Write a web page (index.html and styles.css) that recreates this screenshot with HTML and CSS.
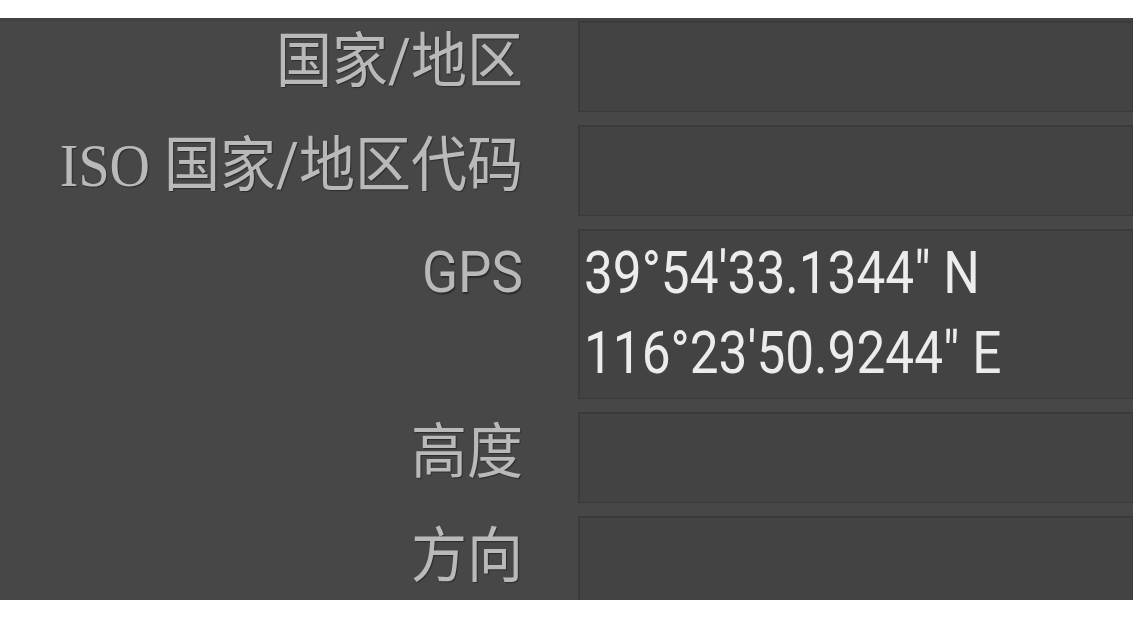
FILE: index.html
```html
<!DOCTYPE html>
<html lang="zh-CN">
<head>
<meta charset="utf-8">
<title>元数据</title>
<link rel="stylesheet" href="styles.css">
</head>
<body>
<div class="panel">
  <div class="label"><span class="label-text">国家/地区</span></div>
  <div class="field"></div>

  <div class="label"><span class="label-text"><span class="latin-serif">ISO</span> 国家/地区代码</span></div>
  <div class="field"></div>

  <div class="label label-latin"><span class="label-text">GPS</span></div>
  <div class="field field-tall">
    <div class="value"><span class="value-text">39°54'33.1344" N</span></div>
    <div class="value"><span class="value-text">116°23'50.9244" E</span></div>
  </div>

  <div class="label"><span class="label-text">高度</span></div>
  <div class="field"></div>

  <div class="label"><span class="label-text">方向</span></div>
  <div class="field"></div>
</div>
</body>
</html>
```

FILE: styles.css
```css
html, body {
  margin: 0;
  padding: 0;
  background: #ffffff;
}

body {
  width: 1133px;
  height: 635px;
  overflow: hidden;
}

.panel {
  margin-top: 18px;
  height: 582px;
  box-sizing: border-box;
  overflow: hidden;
  background: #474747;
  border-top: 3px solid #424242;
  display: grid;
  grid-template-columns: 578px 1fr;
  row-gap: 13px;
  align-content: start;
  font-family: Roboto, "Noto Sans CJK SC", sans-serif;
}

.label {
  padding-right: 55px;
  text-align: right;
  color: #b9b9b9;
  font-size: 56px;
  line-height: 80px;
  white-space: nowrap;
  text-shadow: 1px 1px 1px #2c2c2c;
}

.label-latin {
  padding-top: 4px;
  font-size: 53px;
}

.label-text {
  display: inline-block;
  transform: scaleY(1.08);
  transform-origin: center;
}

.latin-serif {
  font-family: "Liberation Serif", "Noto Sans CJK SC", serif;
}

.field {
  height: 91px;
  box-sizing: border-box;
  background: #434343;
  border: 1px solid #3b3b3b;
  border-top-width: 2px;
  border-left-width: 2px;
}

.field-tall {
  height: 170px;
  padding: 2px 0 0 4px;
}

.value {
  color: #ececec;
  font-size: 59px;
  line-height: 80px;
  white-space: nowrap;
}

.value-text {
  display: inline-block;
  transform: scaleX(0.87);
  transform-origin: left center;
}
```
